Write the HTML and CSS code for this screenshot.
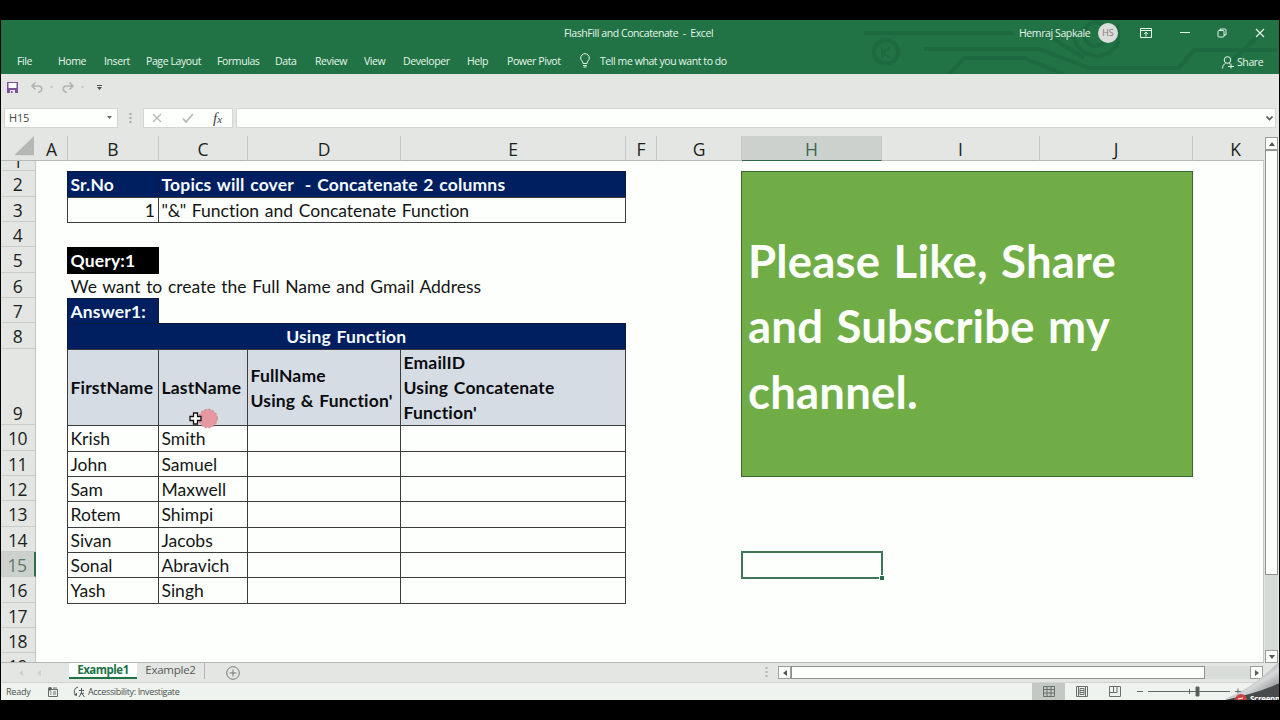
FILE: index.html
```html
<!DOCTYPE html>
<html lang="en">
<head>
    <meta charset="UTF-8">
    <title>FlashFill and Concatenate - Excel</title>
    <link rel="stylesheet" href="styles.css">
</head>
<body>
    <div class="window">
        <header class="ribbon">
            <svg class="circuit" width="430" height="54" viewBox="0 0 430 54" fill="none" stroke="#1b633c" stroke-width="4">
                <path d="M15 13H165M75 29H190L240 48H330L345 30H428"/>
                <path d="M100 54L115 38H175L215 54M190 10L235 38"/>
                <circle cx="37" cy="32" r="12"/>
                <path d="M33 27v11M41 27l-7 6 7 5" stroke-width="2"/>
                <path d="M225 10a23 23 0 0 0 44 12V4M380 44L415 10" />
                <circle cx="247" cy="14" r="12"/>
            </svg>
            <div class="titlebar">
                <span class="doc-title">FlashFill and Concatenate&nbsp; -&nbsp; Excel</span>
                <div class="account">
                    <span class="user">Hemraj Sapkale</span>
                    <span class="avatar">HS</span>
                </div>
                <div class="win-buttons">
                    <svg width="12" height="10" viewBox="0 0 12 10" fill="none" stroke="#e6f5ea"><path d="M.5 .5h11v9H.5zM.5 2.500h11M6 8.500V4.500M4 6l2-2 2 2"/></svg>
                    <svg width="10" height="10" viewBox="0 0 10 10" stroke="#e6f5ea"><path d="M0 4.500h10"/></svg>
                    <svg width="10" height="10" viewBox="0 0 10 10" fill="none" stroke="#e6f5ea"><rect x="1" y="2.500" width="6" height="6.500" rx="1"/><path d="M3 2.500V1h5q1 0 1 1v5H7"/></svg>
                    <svg width="10" height="10" viewBox="0 0 10 10" stroke="#e6f5ea" stroke-width="1.200"><path d="M1 1l8 8M9 1L1 9"/></svg>
                </div>
            </div>
            <nav class="menu">
                <span>File</span>
                <span>Home</span>
                <span>Insert</span>
                <span>Page Layout</span>
                <span>Formulas</span>
                <span>Data</span>
                <span>Review</span>
                <span>View</span>
                <span>Developer</span>
                <span>Help</span>
                <span>Power Pivot</span>
                <svg width="10" height="15" viewBox="0 0 10 15" fill="none" stroke="#e6f5ea"><path d="M3 10.500C3 8 .700 7.500 .700 5a4.300 4.300 0 0 1 8.600 0C9.300 7.500 7 8 7 10.500zM3 12.500h4M3.500 14h3"/></svg>
                <span class="tell-me">Tell me what you want to do</span>
                <span class="share">
                    <svg width="12" height="13" viewBox="0 0 12 13" fill="none" stroke="#e6f5ea"><circle cx="5.500" cy="4" r="3.300"/><path d="M.5 12.500c0-3 1.500-4.500 3-5M7 7.500l1 .5M6 10.500h6M9 7.500v5"/></svg>
                    Share
                </span>
            </nav>
        </header>

        <div class="quick-access">
            <svg width="11" height="11" viewBox="0 0 11 11"><path d="M0 0h11v11H0z" fill="#7d529b"/><path d="M1.500 1h8v5h-8z" fill="#fafdfa"/><path d="M3 8h5v3H3z" fill="#e9e4ee"/><path d="M4 9h1.500v2H4z" fill="#7d529b"/></svg>
            <svg width="12" height="11" viewBox="0 0 12 11" fill="none" stroke="#b1b6b2" stroke-width="1.700"><path d="M4.500 .5L1 4l3.500 3.500M1 4h6.500c4.500 0 4.500 6-.5 6.500"/></svg>
            <i class="dot"></i>
            <svg width="12" height="11" viewBox="0 0 12 11" fill="none" stroke="#b1b6b2" stroke-width="1.700"><path d="M7.500 .5L11 4 7.500 7.500M11 4H4.500c-4.500 0-4.500 6 .5 6.500"/></svg>
            <i class="dot"></i>
            <svg class="customize" width="5" height="5" viewBox="0 0 5 5"><path d="M0 0h5v1H0zM0 2h5L2.500 5z" fill="#4c524e"/></svg>
        </div>

        <div class="formula-bar">
            <div class="name-box">H15 <svg width="5" height="3" viewBox="0 0 5 3"><path d="M0 0h5L2.500 3z" fill="#636864"/></svg></div>
            <svg class="grip" width="3" height="10" viewBox="0 0 3 10" fill="#a5aaa6"><path d="M.5 0h2v2h-2zM.5 4h2v2h-2zM.5 8h2v2h-2z"/></svg>
            <div class="fx-buttons">
                <svg width="10" height="10" viewBox="0 0 10 10" stroke="#b5b9b6" stroke-width="1.300"><path d="M1 1l8 8M9 1L1 9"/></svg>
                <svg width="12" height="10" viewBox="0 0 12 10" fill="none" stroke="#b5b9b6" stroke-width="1.800"><path d="M1 5.500L4 9l7-8"/></svg>
                <span class="fx">f<small>x</small></span>
            </div>
            <div class="formula-input"><svg width="7" height="5" viewBox="0 0 7 5" fill="none" stroke="#555b57" stroke-width="1.600"><path d="M.5 .5l3 3 3-3"/></svg></div>
        </div>

        <main class="sheet">
            <div class="col-heads">
                <span class="corner"></span>
                <span>A</span><span>B</span><span>C</span><span>D</span><span>E</span><span>F</span><span>G</span><span class="active">H</span><span>I</span><span>J</span><span>K</span>
            </div>
            <div class="grid">
                <div class="row-heads">
                    <span class="cut-top">1</span><span>2</span><span>3</span><span>4</span><span>5</span><span>6</span><span>7</span><span>8</span><span class="tall">9</span><span>10</span><span>11</span><span>12</span><span>13</span><span>14</span><span class="active">15</span><span>16</span><span>17</span><span>18</span><span>19</span>
                </div>

                <div class="cell navy r2 b">Sr.No</div>
                <div class="cell navy r2 c-e">Topics will cover&nbsp; - Concatenate 2 columns</div>
                <div class="cell r3 b right">1</div>
                <div class="cell r3 c-e">"&amp;" Function and Concatenate Function</div>
                <div class="cell black r5 b">Query:1</div>
                <div class="cell plain r6 b-e">We want to create the Full Name and Gmail Address</div>
                <div class="cell navy r7 b">Answer1:</div>
                <div class="cell navy r8 b-e center">Using Function</div>

                <div class="cell head r9 b">FirstName</div>
                <div class="cell head r9 c">LastName</div>
                <div class="cell head r9 d">FullName<br>Using &amp; Function'</div>
                <div class="cell head r9 e">EmailID<br>Using Concatenate<br>Function'</div>

                <div class="cell r10 b">Krish</div><div class="cell r10 c">Smith</div><div class="cell r10 d"></div><div class="cell r10 e"></div>
                <div class="cell r11 b">John</div><div class="cell r11 c">Samuel</div><div class="cell r11 d"></div><div class="cell r11 e"></div>
                <div class="cell r12 b">Sam</div><div class="cell r12 c">Maxwell</div><div class="cell r12 d"></div><div class="cell r12 e"></div>
                <div class="cell r13 b">Rotem</div><div class="cell r13 c">Shimpi</div><div class="cell r13 d"></div><div class="cell r13 e"></div>
                <div class="cell r14 b">Sivan</div><div class="cell r14 c">Jacobs</div><div class="cell r14 d"></div><div class="cell r14 e"></div>
                <div class="cell r15 b">Sonal</div><div class="cell r15 c">Abravich</div><div class="cell r15 d"></div><div class="cell r15 e"></div>
                <div class="cell r16 b">Yash</div><div class="cell r16 c">Singh</div><div class="cell r16 d"></div><div class="cell r16 e"></div>

                <div class="banner">Please Like, Share<br>and Subscribe my<br>channel.</div>
                <div class="selection"></div>
            </div>
            <div class="v-scroll">
                <div class="scroll-btn"><svg width="6" height="4" viewBox="0 0 6 4"><path d="M0 4h6L3 0z" fill="#555"/></svg></div>
                <div class="v-thumb"></div>
                <div class="scroll-btn last"><svg width="6" height="4" viewBox="0 0 6 4"><path d="M0 0h6L3 4z" fill="#555"/></svg></div>
            </div>
        </main>

        <div class="tab-bar">
            <div class="tab-nav"><i></i><i></i></div>
            <div class="tab current">Example1</div>
            <div class="tab">Example2</div>
            <svg class="add" width="14" height="14" viewBox="0 0 14 14" fill="none" stroke="#747a76"><circle cx="7" cy="7" r="6.300"/><path d="M7 3.500v7M3.500 7h7"/></svg>
            <svg class="grip" width="3" height="10" viewBox="0 0 3 10" fill="#b0b5b1"><path d="M.5 0h2v2h-2zM.5 4h2v2h-2zM.5 8h2v2h-2z"/></svg>
            <div class="h-scroll">
                <div class="scroll-btn"><svg width="4" height="6" viewBox="0 0 4 6"><path d="M4 0v6L0 3z" fill="#555"/></svg></div>
                <div class="h-thumb"></div>
                <div class="scroll-btn last"><svg width="4" height="6" viewBox="0 0 4 6"><path d="M0 0v6l4-3z" fill="#555"/></svg></div>
            </div>
        </div>

        <footer class="status">
            <span class="ready">Ready</span>
            <svg class="macro" width="10" height="10" viewBox="0 0 10 10" fill="none" stroke="#666c68"><path d="M.5 3v6.500h9V3M0 2.500h10M2 5h1.500M5 5h3M2 7h1.500M5 7h3"/><circle cx="2" cy="1.700" r="1.500" fill="#555"/><path d="M5 1h4"/></svg>
            <svg class="access" width="13" height="12" viewBox="0 0 13 12" fill="none" stroke="#555b57"><path d="M5 1a4.500 4.500 0 0 0-2 8M1 8.500l2.500 1V7M6 4.500h5M8.500 2v3M8.500 5v2L6 11M8.500 7l3 4M7 8l4-1"/></svg>
            <span class="investigate">Accessibility: Investigate</span>
            <div class="views">
                <span class="on"><svg width="12" height="11" viewBox="0 0 12 11" fill="none" stroke="#6a706c"><path d="M.5 .5h11v10H.5zM.5 3.500h11M.5 7h11M4 .5v10M8 .5v10"/></svg></span>
                <span><svg width="12" height="11" viewBox="0 0 12 11" fill="none" stroke="#6a706c"><path d="M.5 .5h11v10H.5zM2.500 .5v10M9.500 .5v10M4 2.500h4v6H4zM4 4.500h4M4 6.500h4"/></svg></span>
                <span><svg width="12" height="11" viewBox="0 0 12 11" fill="none" stroke="#6a706c"><path d="M.5 .5h11v10H.5zM.5 6.500H8V.5M4.500 .5v6"/></svg></span>
            </div>
            <svg class="zoom" width="106" height="11" viewBox="0 0 106 11" fill="none" stroke="#626864"><path d="M1 5.500h6M12 5.500h82M53.500 3v5M99 5.500h6M102 2.500v6"/><path d="M60 1h3v9h-3z" fill="#555b57"/></svg>
        </footer>

        <!-- recorder mouse highlight -->
        <svg class="pointer" width="30" height="22" viewBox="0 0 30 22">
            <circle cx="19" cy="10.500" r="9.300" fill="#e6979f" stroke="#c97781" stroke-dasharray="2 2"/>
            <path d="M4.500 5h4v3.500H12v4H8.500V16h-4v-3.500H1v-4h3.500z" fill="#fff" stroke="#111" stroke-width="1.300"/>
        </svg>

        <!-- recorder page curl -->
        <div class="curl">
            <svg width="57" height="38" viewBox="0 0 57 38">
                <defs>
                    <linearGradient id="curlFill" x1="0" y1="0" x2="1" y2="1">
                        <stop offset=".35" stop-color="#8b9090"/>
                        <stop offset=".6" stop-color="#d6d9d9"/>
                        <stop offset=".85" stop-color="#8a8e8e"/>
                    </linearGradient>
                </defs>
                <path d="M3 38Q32 31 57 21V38z" fill="#484b4b"/>
                <path d="M3 37C30 26 43 12 57 0V21Q36 32 3 37z" fill="url(#curlFill)"/>
                <circle cx="19" cy="38" r="6" fill="#c9463f"/>
                <path d="M16 37l5-1" stroke="#fff"/>
            </svg>
            <span>Screenp</span>
        </div>
    </div>
</body>
</html>
```
FILE: styles.css
```css
* {
    box-sizing: border-box;
}
body {
    margin: 0;
    padding: 20px 1px;
    height: 720px;
    background: #000;
    overflow: hidden;
    font-family: "Open Sans", "Noto Sans", sans-serif;
    font-size: 11px;
    font-variant-ligatures: none;
}
svg {
    display: block;
    flex: none;
}
.window {
    position: relative;
    height: 680px;
    background: #e3e6e2;
    overflow: hidden;
    white-space: nowrap;
}

/* ribbon */
.ribbon {
    position: relative;
    height: 54px;
    background: #217346;
    color: #e6f5ea;
}
.circuit {
    position: absolute;
    right: 0;
    top: 0;
    opacity: .55;
}
.titlebar {
    position: relative;
    display: grid;
    grid-template-columns: 563px 455px 121px 1fr;
    align-items: center;
    height: 26px;
}
.doc-title {
    grid-column: 2;
    font-size: 10.5px;
    letter-spacing: -0.42px;
}
.account {
    display: flex;
    align-items: center;
    gap: 8px;
}
.user {
    width: 71px;
    font-size: 10.5px;
    letter-spacing: -0.4px;
}
.avatar {
    width: 20px;
    height: 20px;
    border-radius: 50%;
    background: #d9dedb;
    color: #8d7478;
    font-size: 9px;
    line-height: 20px;
    text-align: center;
}
.win-buttons {
    display: flex;
    justify-content: space-between;
    padding-right: 14px;
}
.menu {
    position: relative;
    display: grid;
    grid-template-columns: 41px 46px 42px 71px 58px 40px 49px 39px 64px 40px 72px 21px 621px 1fr;
    align-items: center;
    height: 29px;
    padding-left: 16px;
    font-size: 10.5px;
    letter-spacing: -0.4px;
}
.menu > svg {
    margin-left: 1px;
}
.tell-me {
    letter-spacing: -0.42px;
}
.share {
    display: flex;
    align-items: center;
    gap: 3px;
    padding: 3px 0 0 1px;
}

/* quick access toolbar */
.quick-access {
    display: flex;
    align-items: center;
    height: 34px;
    padding: 0 0 8px 6px;
}
.quick-access svg + svg {
    margin-left: 13px;
}
.dot {
    width: 3px;
    height: 2px;
    margin: 0 9px 0 7px;
    background: #cbd0cc;
}
.quick-access .customize {
    margin-left: 4px;
}

/* formula bar */
.formula-bar {
    display: flex;
    align-items: center;
    height: 20px;
}
.name-box,
.fx-buttons,
.formula-input {
    display: flex;
    align-items: center;
    height: 20px;
    background: #fcfffc;
    border: 1px solid #d3d7d3;
}
.name-box {
    justify-content: space-between;
    width: 114px;
    margin-left: 3px;
    padding: 0 5px 1px 4px;
    color: #444a46;
    letter-spacing: -0.2px;
}
.formula-bar .grip {
    margin: 0 11px 0 11px;
}
.fx-buttons {
    width: 90px;
    padding-left: 8px;
}
.fx-buttons svg {
    margin-right: 20px;
}
.fx {
    margin-left: -1px;
    color: #444;
    font: italic 15px "Liberation Serif", serif;
}
.fx small {
    font-size: 11px;
}
.formula-input {
    flex: 1;
    justify-content: flex-end;
    margin: 0 3px 0 3px;
    padding-right: 2px;
}

/* sheet */
.sheet {
    position: relative;
    height: 535px;
    padding-top: 8px;
}
.col-heads {
    display: grid;
    grid-template-columns: 35px 32px 91px 89px 153px 225px 31px 85px 140px 158px 153px 71px;
    width: 1263px;
    height: 25px;
    border-bottom: 1px solid #b7bbb7;
    font-size: 17.5px;
    line-height: 27px;
    text-align: center;
    color: #1c1f1d;
}
.col-heads span {
    height: 25px;
    border-right: 1px solid #c3c7c3;
}
.col-heads span:last-child {
    border-right: 0;
    padding-left: 14px;
}
.col-heads .active {
    background: #cdd1cd;
    color: #3b6650;
    border-bottom: 1px solid #31694b;
}
.col-heads .corner {
    height: 22px;
    margin-right: 2px;
    border: 0;
    background: #b4b8b4;
    clip-path: polygon(100% 0, 100% 88%, 40% 88%);
}
.grid {
    display: grid;
    grid-template-columns: 35px 31px 91px 89px 153px 225px 31px 85px 141px 157px 153px 71px;
    grid-template-rows: 10px 26px 25px 25px 26px 25px 25px 26px 76px 26px 25px 25px 26px 25px 25px 26px 25px 25px 10px;
    width: 1263px;
    height: 502px;
    background: #fcfffc;
    border-right: 1px solid #c6cac6;
    border-bottom: 1px solid #b3b7b3;
    overflow: hidden;
}
.row-heads {
    grid-column: 1;
    grid-row: 1 / -1;
    display: grid;
    grid-template-rows: subgrid;
    background: #e3e6e2;
    border-right: 1px solid #c3c7c3;
    font-size: 17.5px;
    line-height: 26px;
    text-align: center;
    color: #1c1f1d;
    letter-spacing: -0.4px;
}
.row-heads span {
    border-bottom: 1px solid #c9cdc9;
    overflow: hidden;
    padding-right: 1px;
}
.row-heads .cut-top {
    line-height: 0;
}
.row-heads .tall {
    padding-top: 51px;
}
.row-heads .active {
    background: #cdd1cd;
    color: #5b7a68;
    border-right: 2px solid #31694b;
    margin-right: -1px;
}
.cell {
    z-index: 1;
    display: flex;
    align-items: center;
    margin: 0 -1px -1px 0;
    padding: 0 3px 0 2.5px;
    border: 1px solid #3a3d3b;
    font-family: Lato, "Open Sans", sans-serif;
    font-size: 17.5px;
    line-height: 25px;
    word-spacing: 1.2px;
    color: #141615;
}
.plain {
    border-color: transparent;
}
.navy,
.black,
.head {
    font-weight: bold;
    letter-spacing: 0.17px;
}
.navy {
    background: #001f60;
    border-color: #0c1a3c;
    color: #f4fbff;
}
.black {
    background: #000;
    border-color: #000;
    color: #fff;
}
.head {
    background: #d6dce4;
    color: #0a0c0e;
}
.right {
    justify-content: flex-end;
}
.center {
    justify-content: center;
}
.b { grid-column: 3; }
.c { grid-column: 4; }
.d { grid-column: 5; }
.e { grid-column: 6; }
.b-e { grid-column: 3 / 7; }
.c-e { grid-column: 4 / 7; }
.r2 { grid-row: 2; }
.r3 { grid-row: 3; }
.r5 { grid-row: 5; }
.r6 { grid-row: 6; }
.r7 { grid-row: 7; }
.r8 { grid-row: 8; }
.r9 { grid-row: 9; }
.r10 { grid-row: 10; }
.r11 { grid-row: 11; }
.r12 { grid-row: 12; }
.r13 { grid-row: 13; }
.r14 { grid-row: 14; }
.r15 { grid-row: 15; }
.r16 { grid-row: 16; }
.banner {
    grid-column: 9 / 12;
    grid-row: 2 / 12;
    display: flex;
    align-items: center;
    margin: 0 -1px -1px 0;
    padding: 4px 7px 0 6px;
    background: #70ad47;
    border: 1px solid #416530;
    color: #fcfffa;
    font: bold 45.5px/65.5px Lato, "Open Sans", sans-serif;
    letter-spacing: 0.2px;
    word-spacing: 2px;
}
.selection {
    grid-column: 9;
    grid-row: 15;
    position: relative;
    margin: -1px -1px -2px 0;
    border: 2px solid #3f7559;
}
.selection::after {
    content: "";
    position: absolute;
    right: -3px;
    bottom: -3px;
    width: 4px;
    height: 4px;
    background: #2f6b4b;
    outline: 1px solid #fcfffc;
}

/* scroll bars */
.v-scroll {
    position: absolute;
    top: 9px;
    right: 1px;
    display: flex;
    flex-direction: column;
    width: 13px;
    height: 526px;
    background: #d6dad6;
}
.scroll-btn {
    display: grid;
    place-items: center;
    flex: none;
    width: 13px;
    height: 13px;
    background: #fcfffc;
    border: 1px solid #9b9f9b;
}
.v-thumb {
    height: 425px;
    background: #fcfffc;
    border: 1px solid #8e928e;
}
.v-scroll .last {
    margin-top: auto;
}

/* sheet tabs */
.tab-bar {
    display: flex;
    height: 19px;
    font-size: 11.5px;
    line-height: 14px;
    color: #555b57;
}
.tab-nav {
    display: flex;
    justify-content: center;
    gap: 14px;
    width: 68px;
    padding: 7px 10px 0 0;
}
.tab-nav i {
    border: 3px solid transparent;
    border-right: 4px solid #cdd1cd;
    border-left: 0;
    height: 6px;
}
.tab {
    width: 68px;
    height: 16px;
    text-align: center;
    border-right: 1px solid #b3b7b3;
    letter-spacing: -0.25px;
}
.tab.current {
    background: #fcfffc;
    border: 0;
    border-bottom: 2px solid #217346;
    color: #217346;
    font-weight: bold;
    letter-spacing: -0.5px;
}
.add {
    margin: 3px 0 0 21px;
}
.tab-bar .grip {
    margin: 4px 0 0 525px;
}
.h-scroll {
    display: flex;
    width: 485px;
    height: 13px;
    margin: 3px 0 0 10px;
    background: #d9ddd9;
}
.h-thumb {
    width: 414px;
    background: #fcfffc;
    border: 1px solid #8e928e;
}
.h-scroll .last {
    margin-left: auto;
}

/* status bar */
.status {
    display: flex;
    align-items: center;
    height: 18px;
    background: #eff3ef;
    border-top: 1px solid #d0d4d0;
    font-size: 9px;
    color: #4a504c;
    letter-spacing: -0.35px;
}
.ready {
    width: 42px;
    padding-left: 5px;
    letter-spacing: -0.2px;
}
.macro {
    margin: 0 15px 0 5px;
}
.investigate {
    width: 944px;
    margin-left: 2px;
}
.views {
    display: flex;
    height: 17px;
}
.views span {
    display: grid;
    place-items: center;
    width: 33px;
}
.views .on {
    background: #c3c8c4;
}
.zoom {
    margin-left: 5px;
}

/* overlays */
.pointer {
    position: absolute;
    left: 188px;
    top: 388px;
    z-index: 2;
}
.curl {
    position: absolute;
    right: 0;
    bottom: 0;
    z-index: 2;
    overflow: hidden;
}
.curl span {
    position: absolute;
    left: 28px;
    bottom: -4px;
    color: #fff;
    font-size: 8px;
    font-weight: bold;
    letter-spacing: -0.3px;
}
```
